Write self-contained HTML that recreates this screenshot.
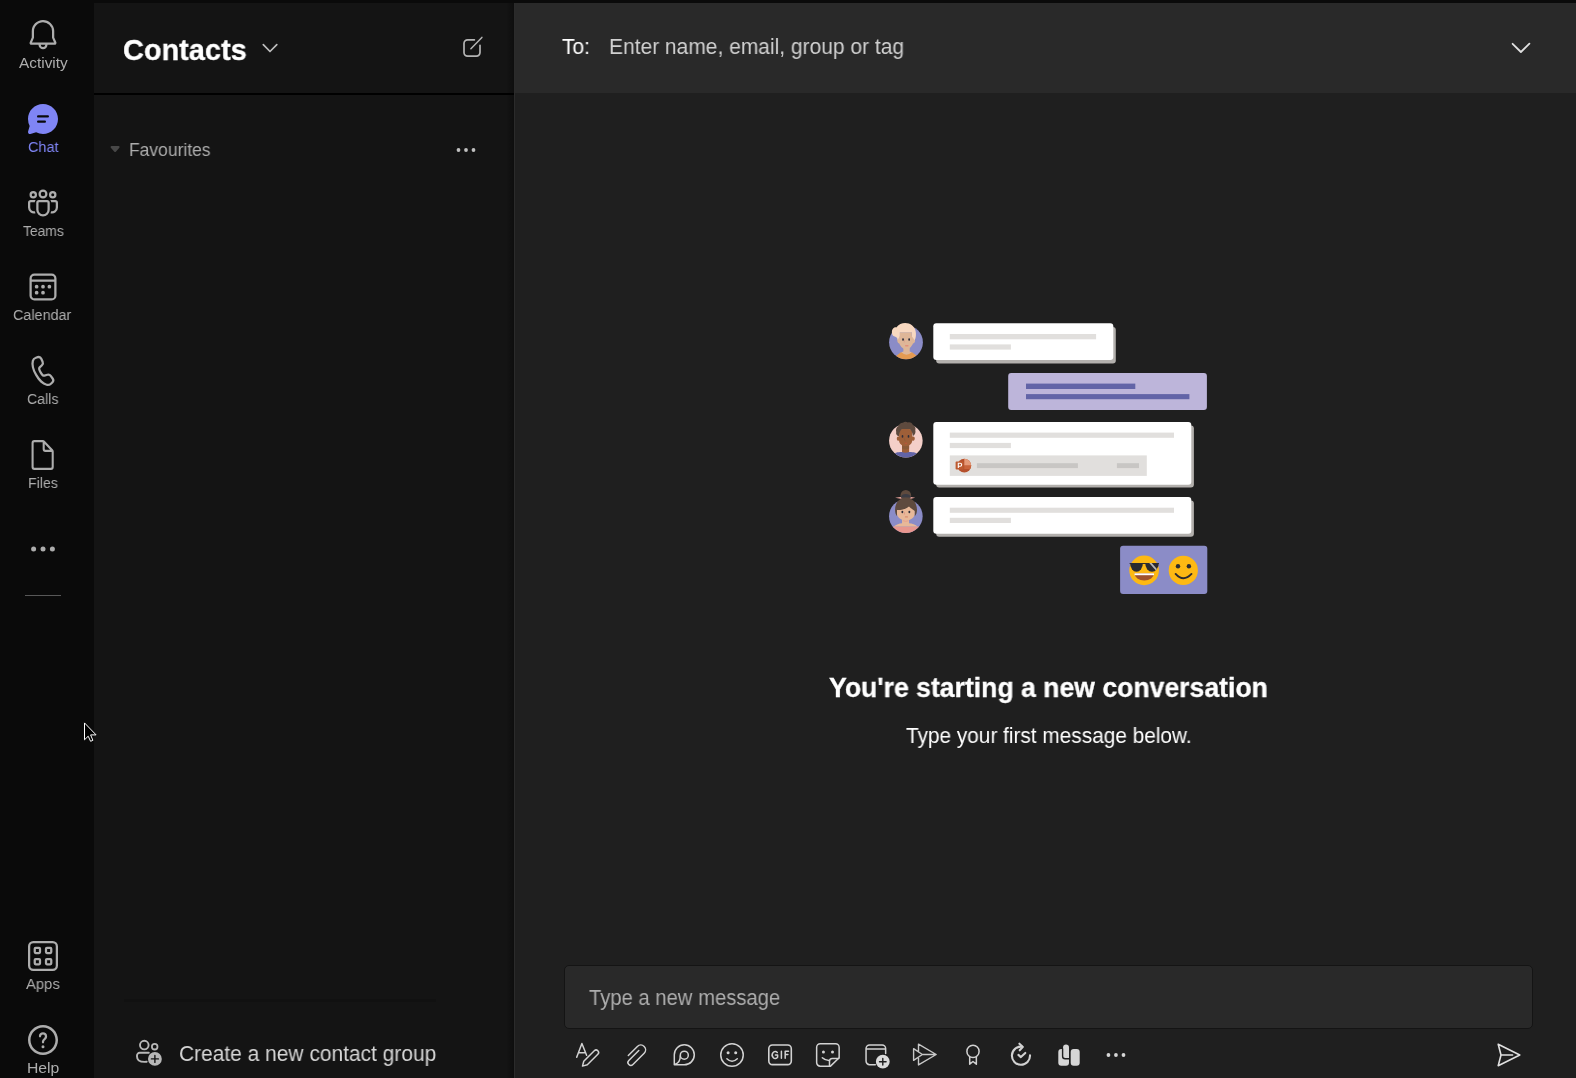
<!DOCTYPE html>
<html>
<head>
<meta charset="utf-8">
<title>Chat | Microsoft Teams</title>
<style>
*{margin:0;padding:0;box-sizing:border-box;}
html,body{width:1576px;height:1078px;overflow:hidden;background:#1f1f1f;}
body{font-family:"Liberation Sans",sans-serif;color:#fff;position:relative;}
.abs{position:absolute;}
.t{position:absolute;white-space:nowrap;line-height:1;transform-origin:0 0;will-change:transform;}
#topstrip{left:0;top:0;width:1576px;height:3px;background:#0a0a0a;}
#rail{left:0;top:0;width:94px;height:1078px;background:#0a0a0a;}
#panel{left:94px;top:3px;width:420px;height:1075px;background:#141414;}
#panelshade{left:506px;top:3px;width:8px;height:1075px;background:linear-gradient(90deg,rgba(0,0,0,0),rgba(0,0,0,.32));}
#panelline{left:94px;top:93px;width:420px;height:2px;background:#000;}
#mainhead{left:514px;top:3px;width:1062px;height:90px;background:#292929;}
#mainedge{left:514px;top:3px;width:1px;height:1075px;background:#2b2b2b;}
#compose{left:564px;top:965px;width:969px;height:64px;background:#292929;border:1px solid #141414;border-radius:5px;}
.rl{position:absolute;white-space:nowrap;line-height:1;color:#adadad;transform-origin:0 0;will-change:transform;}
svg{position:absolute;overflow:visible;}
</style>
</head>
<body>
<div class="abs" id="rail"></div>
<div class="abs" id="panel"></div>
<div class="abs" id="panelshade"></div>
<div class="abs" id="panelline"></div>
<div class="abs" id="mainhead"></div>
<div class="abs" id="mainedge"></div>
<div class="abs" id="topstrip"></div>
<div class="abs" id="compose"></div>

<!-- RAIL LABELS -->
<div class="rl" id="l-activity" style="left:18.95px;top:54.66px;font-size:15.4px;transform:scaleX(0.9997);">Activity</div>
<div class="rl" id="l-chat" style="left:27.96px;top:138.66px;font-size:15.4px;transform:scaleX(0.9391);color:#7f85f5">Chat</div>
<div class="rl" id="l-teams" style="left:23.08px;top:222.66px;font-size:15.4px;transform:scaleX(0.8989);">Teams</div>
<div class="rl" id="l-calendar" style="left:13.02px;top:306.66px;font-size:15.4px;transform:scaleX(0.9338);">Calendar</div>
<div class="rl" id="l-calls" style="left:27.32px;top:390.66px;font-size:15.4px;transform:scaleX(0.9211);">Calls</div>
<div class="rl" id="l-files" style="left:28.00px;top:474.66px;font-size:15.4px;transform:scaleX(0.9200);">Files</div>
<div class="rl" id="l-apps" style="left:26.17px;top:975.66px;font-size:15.4px;transform:scaleX(0.9618);">Apps</div>
<div class="rl" id="l-help" style="left:26.95px;top:1059.66px;font-size:15.4px;transform:scaleX(1.0226);">Help</div>

<!-- PANEL TEXT -->
<div class="t" id="t-contacts" style="left:122.67px;top:34.61px;font-size:30px;transform:scaleX(0.9634);font-weight:bold;-webkit-text-stroke:.35px #fff">Contacts</div>
<div class="t" id="t-fav" style="left:129.01px;top:141.34px;font-size:18.5px;transform:scaleX(0.9447);color:#adadad">Favourites</div>
<div class="t" id="t-create" style="left:178.68px;top:1042.62px;font-size:21.6px;transform:scaleX(0.9699);color:#d6d6d6">Create a new contact group</div>

<!-- MAIN TEXT -->
<div class="t" id="t-to" style="left:561.52px;top:35.62px;font-size:21.6px;transform:scaleX(0.9723);color:#fff">To:</div>
<div class="t" id="t-enter" style="left:609.36px;top:35.62px;font-size:21.6px;transform:scaleX(0.9714);color:#d0d0d0">Enter name, email, group or tag</div>
<div class="t" id="t-head" style="left:828.69px;top:675.11px;font-size:26.8px;transform:scaleX(0.9925);font-weight:bold;-webkit-text-stroke:.3px #fff">You're starting a new conversation</div>
<div class="t" id="t-sub" style="left:905.80px;top:724.72px;font-size:21.6px;transform:scaleX(0.9635);">Type your first message below.</div>
<div class="t" id="t-type" style="left:589.07px;top:986.72px;font-size:21.6px;transform:scaleX(0.9371);color:#adadad">Type a new message</div>


<!-- rail icons: 36px boxes (24-grid x1.5) -->
<svg id="i-activity" style="left:25px;top:16.5px" width="36" height="36" viewBox="0 0 24 24" fill="#adadad"><path d="M12 1.996a7.49 7.49 0 0 1 7.496 7.25l.004.25v4.097l1.380 3.156a1.250 1.250 0 0 1-1.145 1.750L15 18.502a3 3 0 0 1-5.995.177L9 18.499H4.275a1.251 1.251 0 0 1-1.147-1.747L4.500 13.594V9.496c0-4.155 3.352-7.500 7.500-7.500ZM13.500 18.500l-3 .002a1.500 1.500 0 0 0 2.993.145l.007-.147ZM12 3.496c-3.320 0-6 2.674-6 6v4.410L4.656 17h14.697L18 13.907V9.509l-.004-.225A5.988 5.988 0 0 0 12 3.496Z"/></svg>
<svg id="i-chat" style="left:25px;top:100.5px" width="36" height="36" viewBox="0 0 24 24" fill="#7f85f5"><path fill-rule="evenodd" d="M12 2c5.523 0 10 4.477 10 10s-4.477 10-10 10a9.960 9.960 0 0 1-4.587-1.112l-3.826 1.067a1.250 1.250 0 0 1-1.540-1.540l1.068-3.823A9.960 9.960 0 0 1 2 12C2 6.477 6.477 2 12 2ZM8.750 13a.750.750 0 0 0 0 1.500h4.500a.750.750 0 0 0 0-1.500h-4.500ZM8 10.250c0 .414.336.750.750.750h6.500a.750.750 0 0 0 0-1.500h-6.500a.750.750 0 0 0-.750.750Z"/></svg>
<svg id="i-teams" style="left:25px;top:184.5px" width="36" height="36" viewBox="0 0 24 24" fill="#adadad"><path d="M14.754 10c.966 0 1.750.784 1.750 1.750v4.749a4.501 4.501 0 0 1-9.002 0V11.750c0-.966.783-1.750 1.750-1.750h5.502Zm0 1.500H9.252a.250.250 0 0 0-.250.250v4.749a3.001 3.001 0 0 0 6.002 0V11.750a.250.250 0 0 0-.250-.250ZM3.750 10h3.381a2.738 2.738 0 0 0-.618 1.500H3.750a.250.250 0 0 0-.250.250v3.249a2.501 2.501 0 0 0 3.082 2.433c.085.504.240.985.453 1.432A4.001 4.001 0 0 1 2 14.999V11.750c0-.966.784-1.750 1.750-1.750Zm13.125 0h3.375c.966 0 1.750.784 1.750 1.750V15a4 4 0 0 1-5.030 3.866c.214-.448.369-.929.455-1.433A2.500 2.500 0 0 0 20.500 15v-3.250a.250.250 0 0 0-.250-.250h-2.757a2.738 2.738 0 0 0-.618-1.500ZM12 3a3 3 0 1 1 0 6 3 3 0 0 1 0-6Zm6.500 1a2.500 2.500 0 1 1 0 5 2.500 2.500 0 0 1 0-5Zm-13 0a2.500 2.500 0 1 1 0 5 2.500 2.500 0 0 1 0-5Zm6.500.5a1.500 1.500 0 1 0 0 3 1.500 1.500 0 0 0 0-3Zm6.500 1a1 1 0 1 0 0 2 1 1 0 0 0 0-2Zm-13 0a1 1 0 1 0 0 2 1 1 0 0 0 0-2Z"/></svg>
<svg id="i-calendar" style="left:25px;top:268.5px" width="36" height="36" viewBox="0 0 24 24" fill="#adadad"><path d="M17.750 3A3.250 3.250 0 0 1 21 6.250v11.500A3.250 3.250 0 0 1 17.750 21H6.250A3.250 3.250 0 0 1 3 17.750V6.250A3.250 3.250 0 0 1 6.250 3h11.500Zm1.750 5.500h-15v9.250c0 .966.784 1.750 1.750 1.750h11.500a1.750 1.750 0 0 0 1.750-1.750V8.500Zm-11.750 6a1.250 1.250 0 1 1 0 2.500 1.250 1.250 0 0 1 0-2.500Zm4.250 0a1.250 1.250 0 1 1 0 2.500 1.250 1.250 0 0 1 0-2.500Zm-4.250-4a1.250 1.250 0 1 1 0 2.500 1.250 1.250 0 0 1 0-2.500Zm4.250 0a1.250 1.250 0 1 1 0 2.500 1.250 1.250 0 0 1 0-2.500Zm4.250 0a1.250 1.250 0 1 1 0 2.500 1.250 1.250 0 0 1 0-2.500Zm1.500-6H6.250A1.750 1.750 0 0 0 4.500 6.250V7h15v-.750a1.750 1.750 0 0 0-1.750-1.750Z"/></svg>
<svg id="i-calls" style="left:25px;top:352.5px" width="36" height="36" viewBox="0 0 24 24" fill="#adadad"><path d="M7.056 2.418l1.167-.351a2.750 2.750 0 0 1 3.302 1.505l.902 2.006a2.750 2.750 0 0 1-.633 3.139L10.300 10.110a.250.250 0 0 0-.078.155c-.044.397.225 1.170.845 2.245.451.781.860 1.330 1.207 1.637.242.215.375.261.432.245l2.010-.615a2.750 2.750 0 0 1 3.034 1.020l1.281 1.776a2.750 2.750 0 0 1-.339 3.605l-.886.840a3.750 3.750 0 0 1-3.587.889c-2.754-.769-5.223-3.093-7.435-6.924-2.215-3.836-2.992-7.140-2.276-9.913a3.750 3.750 0 0 1 2.548-2.652Zm.433 1.437a2.250 2.250 0 0 0-1.529 1.590c-.602 2.332.087 5.261 2.123 8.788 2.033 3.522 4.222 5.582 6.540 6.230a2.250 2.250 0 0 0 2.151-.534l.887-.840a1.250 1.250 0 0 0 .154-1.639l-1.280-1.775a1.250 1.250 0 0 0-1.380-.464l-2.015.617c-1.170.348-2.232-.593-3.372-2.568C9 11.930 8.642 10.900 8.731 10.099c.047-.416.240-.800.546-1.086l1.494-1.393a1.250 1.250 0 0 0 .288-1.427l-.902-2.006a1.250 1.250 0 0 0-1.500-.684l-1.168.352Z"/></svg>
<svg id="i-files" style="left:26.45px;top:436.5px" width="33.3" height="36" viewBox="0 0 24 24" preserveAspectRatio="none" fill="#adadad"><path d="M6 2a2 2 0 0 0-2 2v16a2 2 0 0 0 2 2h12a2 2 0 0 0 2-2V9.828a2 2 0 0 0-.586-1.414l-5.828-5.828A2 2 0 0 0 12.172 2H6Zm-.5 2a.5.5 0 0 1 .5-.5h6V8a2 2 0 0 0 2 2h4.500v10a.5.5 0 0 1-.5.5H6a.5.5 0 0 1-.5-.5V4Zm11.880 4.500H14a.5.5 0 0 1-.5-.5V4.620l3.880 3.880Z"/></svg>
<svg id="i-more" style="left:25px;top:531px" width="36" height="36" viewBox="0 0 36 36" fill="#adadad"><circle cx="8.600" cy="18.100" r="2.500"/><circle cx="18" cy="18.100" r="2.500"/><circle cx="27.400" cy="18.100" r="2.500"/></svg>
<div class="abs" style="left:25px;top:595px;width:36px;height:1px;background:#585858"></div>
<svg id="i-apps" style="left:25px;top:938px" width="36" height="36" viewBox="0 0 24 24" fill="none" stroke="#adadad" stroke-width="1.500"><rect x="2.750" y="2.750" width="18.500" height="18.500" rx="2.750"/><rect x="6.500" y="6.500" width="3.500" height="3.500" rx=".6"/><rect x="14" y="6.500" width="3.500" height="3.500" rx=".6"/><rect x="6.500" y="14" width="3.500" height="3.500" rx=".6"/><rect x="14" y="14" width="3.500" height="3.500" rx=".6"/></svg>
<svg id="i-help" style="left:25px;top:1022px" width="36" height="36" viewBox="0 0 24 24" fill="#adadad"><path d="M12 2c5.523 0 10 4.478 10 10s-4.477 10-10 10S2 17.522 2 12 6.477 2 12 2Zm0 1.667c-4.595 0-8.333 3.738-8.333 8.333 0 4.595 3.738 8.333 8.333 8.333 4.595 0 8.333-3.738 8.333-8.333 0-4.595-3.738-8.333-8.333-8.333ZM12 15.500a1 1 0 1 1 0 2 1 1 0 0 1 0-2Zm0-8.750a2.750 2.750 0 0 1 2.750 2.750c0 1.010-.297 1.574-1.051 2.359l-.169.171c-.622.622-.780.886-.780 1.470a.750.750 0 0 1-1.500 0c0-1.010.297-1.574 1.051-2.359l.169-.171c.622-.622.780-.886.780-1.470a1.250 1.250 0 0 0-2.493-.128l-.007.128a.750.750 0 0 1-1.500 0A2.750 2.750 0 0 1 12 6.750Z"/></svg>


<!-- panel header icons -->
<svg style="left:0;top:0" width="1576" height="1078" viewBox="0 0 1576 1078" fill="none" stroke-linecap="round" stroke-linejoin="round">
 <path d="M263.3 44.700L270 51.500L276.800 44.700" stroke="#bdbdbd" stroke-width="1.700"/>
 <path d="M474.400 39.800H467.600a3.600 3.600 0 0 0-3.600 3.600V52.600a3.600 3.600 0 0 0 3.600 3.600H476.400a3.600 3.600 0 0 0 3.600-3.600V45.300" stroke="#b4b4b4" stroke-width="1.700"/>
 <path d="M481.900 37.400L470.900 48.700" stroke="#b4b4b4" stroke-width="1.500"/>
 <path d="M1512.600 43.800L1520.900 52L1529.400 43.700" stroke="#e0e0e0" stroke-width="1.800"/>
 <path d="M111.600 147H118.600L115.100 151Z" fill="#484848" stroke="#484848" stroke-width="2"/>
 <g fill="#c0c0c0" stroke="none"><circle cx="458.500" cy="150" r="1.900"/><circle cx="466" cy="150" r="1.900"/><circle cx="473.500" cy="150" r="1.900"/></g>
 <!-- create group icon -->
 <circle cx="144.300" cy="1045.100" r="4.300" stroke="#b8b8b8" stroke-width="1.900"/>
 <circle cx="154.700" cy="1046.700" r="2.800" stroke="#b8b8b8" stroke-width="1.800"/>
 <path d="M148.800 1052.800H139.700a2.700 2.700 0 0 0-2.700 2.700v.900c0 3.200 2.600 5.500 7.600 5.500.800 0 1.500-.050 2.100-.150" stroke="#b8b8b8" stroke-width="1.900"/>
 <circle cx="154.900" cy="1058.900" r="6.900" fill="#b8b8b8" stroke="none"/>
 <path d="M151.400 1058.900H158.400M154.900 1055.400V1062.400" stroke="#141414" stroke-width="1.400"/>
 <!-- cursor -->
 <path d="M84.500 723.300V739.800L88.200 736.200L90.600 741.300L92.900 740.300L90.600 734.900H95.700Z" fill="#000" stroke="#fff" stroke-width="1" stroke-linejoin="miter"/>
</svg>
<div class="abs" style="left:124px;top:999px;width:312px;height:3px;background:#111"></div>


<!-- compose toolbar icons -->
<svg style="left:0;top:0" width="1576" height="1078" viewBox="0 0 1576 1078" fill="none" stroke="#d2d2d2" stroke-width="1.500" stroke-linecap="round" stroke-linejoin="round">
 <!-- format -->
 <path d="M576.700 1057.300L581.900 1043.500L586.600 1055.300M578.500 1052.700H585.300"/>
 <g transform="translate(590.200 1058.400) rotate(45)"><path d="M-2.500 -8.300a2.500 2.500 0 0 1 5 0V6.600L0 10.900L-2.500 6.600Z"/></g>
 <!-- attach -->
 <g transform="translate(636 1055) rotate(45)"><path d="M-5.050 5.800V-7A4.800 4.800 0 0 1 4.550 -7V8.900A2.900 2.900 0 0 1 -1.250 8.900V-5.200"/></g>
 <!-- loop -->
 <path d="M674.300 1064.800V1054.800A10 10 0 1 1 684.300 1064.800Z"/>
 <circle cx="684.300" cy="1055.200" r="4"/>
 <path d="M680.300 1056C680.300 1060 679 1062.800 675.300 1064.200"/>
 <!-- emoji -->
 <circle cx="732" cy="1055" r="11.250"/>
 <circle cx="728.100" cy="1052.650" r="1.500" fill="#d2d2d2" stroke="none"/><circle cx="735.700" cy="1052.650" r="1.500" fill="#d2d2d2" stroke="none"/>
 <path d="M726.900 1058.700Q732 1063.700 737.300 1058.700"/>
 <!-- gif -->
 <rect x="768.800" y="1045.050" width="22.500" height="19.600" rx="3.600" stroke-width="1.600"/>
 <path d="M777.300 1052.400A3 3.550 0 1 0 777.600 1057.200V1055.100H775.400M781.400 1051.200V1058.300M785.200 1058.300V1051.200H788.500M785.200 1054.600H787.900" stroke-width="1.500"/>
 <!-- sticker -->
 <path d="M829.600 1066.150H820.200A3.550 3.550 0 0 1 816.650 1062.600V1047.400A3.550 3.550 0 0 1 820.200 1043.850H835.600A3.550 3.550 0 0 1 839.150 1047.400V1057.700L830.500 1066.150"/>
 <path d="M829.500 1066V1061.200A2.800 2.800 0 0 1 832.300 1058.400H838.800"/>
 <circle cx="823.450" cy="1052.100" r="1.500" fill="#d2d2d2" stroke="none"/><circle cx="832.500" cy="1052.100" r="1.500" fill="#d2d2d2" stroke="none"/>
 <path d="M822.300 1057.700Q825 1060.400 829 1060.400"/>
 <!-- schedule -->
 <path d="M875.300 1064.650H869.600A3.550 3.550 0 0 1 866.050 1061.100V1048.600A3.550 3.550 0 0 1 869.600 1045.050H882.100A3.550 3.550 0 0 1 885.650 1048.600V1053.600M866.300 1049.100H885.400"/>
 <circle cx="882.800" cy="1061.700" r="6.900" fill="#dcdcdc" stroke="none"/>
 <path d="M879.500 1061.700H886.100M882.800 1058.400V1065" stroke="#1f1f1f" stroke-width="1.400"/>
 <!-- stream -->
 <path d="M918.500 1051V1044.100L936.200 1054.500L918.500 1064.900V1058M913.600 1048.700L922.400 1054.500L913.600 1060.300ZM922.400 1054.500H936" stroke-width="1.400" stroke="#c8c8c8"/>
 <!-- praise -->
 <circle cx="973" cy="1051.400" r="6.100"/>
 <path d="M969.700 1057.200V1064.200L973 1061.500L976.350 1064.200V1057.200"/>
 <!-- approvals -->
 <g stroke-width="2.100"><path d="M1021.800 1046.700A9.050 9.050 0 1 0 1030 1055.300"/><path d="M1019.400 1043.700L1022.900 1046.900L1019.700 1050.300"/><path d="M1018.400 1054.900L1020.900 1057.100L1025.300 1052.900"/></g>
 <!-- viva -->
 <g fill="#d6d6d6" stroke="none"><rect x="1058.300" y="1049" width="10.700" height="16.700" rx="3"/><rect x="1070.700" y="1049" width="9" height="16.700" rx="3"/></g>
 <path d="M1063.050 1047.300A2.980 2.980 0 0 1 1069 1047.300V1058H1063.050Z" fill="#d6d6d6" stroke="none"/><path d="M1062.600 1048.500V1056.200A2.500 2.500 0 0 0 1065.100 1058.700H1069" stroke="#1f1f1f" stroke-width="1.400" stroke-linecap="butt"/>
 <!-- more -->
 <g fill="#d6d6d6" stroke="none"><circle cx="1108.450" cy="1055" r="1.900"/><circle cx="1115.950" cy="1055" r="1.900"/><circle cx="1123.500" cy="1055" r="1.900"/></g>
 <!-- send -->
 <path d="M1498.200 1044.300L1519.800 1055L1498.200 1065.700L1501 1055ZM1501 1055H1512.600" stroke="#e0e0e0" stroke-width="1.600"/>
</svg>

<!--ICONS4-->

<!-- illustration -->
<svg style="left:0;top:0" width="1576" height="1078" viewBox="0 0 1576 1078">
 <defs>
  <clipPath id="c1"><circle cx="906" cy="342.300" r="16.900"/></clipPath>
  <clipPath id="c2"><circle cx="905.850" cy="440.700" r="16.800"/></clipPath>
  <clipPath id="c3"><circle cx="905.850" cy="516.200" r="16.800"/></clipPath>
  <clipPath id="c3b"><path d="M880 480H930V516.200H922.650A16.800 16.800 0 0 1 889.050 516.200H880Z"/></clipPath>
  <clipPath id="ppt"><circle cx="964.300" cy="465.550" r="6.900"/></clipPath>
  <clipPath id="lensR"><path d="M1145.200 563H1158.800A6.800 8.700 0 0 1 1145.200 563Z"/></clipPath>
 </defs>
 <!-- bubble 1 -->
 <rect x="936.200" y="327" width="179.600" height="36.400" rx="3" fill="#b3b0ad"/>
 <rect x="933.300" y="323.300" width="180" height="36.800" rx="3" fill="#fff"/>
 <rect x="949.800" y="334" width="146.300" height="5.300" fill="#e1dfdd"/>
 <rect x="949.800" y="344.400" width="61.100" height="5.200" fill="#e1dfdd"/>
 <!-- bubble 2 -->
 <rect x="1008.200" y="373" width="198.700" height="37" rx="3" fill="#bdb5da"/>
 <rect x="1026" y="383.600" width="109.300" height="5.400" fill="#6264a7"/>
 <rect x="1026" y="394.100" width="163.400" height="5.100" fill="#6264a7"/>
 <!-- bubble 3 -->
 <rect x="936.200" y="425.500" width="257.700" height="62.100" rx="3" fill="#b3b0ad"/>
 <rect x="933.300" y="422.100" width="258" height="62.600" rx="3" fill="#fff"/>
 <rect x="949.800" y="432.600" width="224.200" height="5.200" fill="#e1dfdd"/>
 <rect x="949.800" y="442.900" width="61.100" height="5.200" fill="#e1dfdd"/>
 <rect x="949.800" y="455.400" width="197" height="20.500" fill="#e1dfdd"/>
 <rect x="976.900" y="463.200" width="101" height="4.900" fill="#c8c6c4"/>
 <rect x="1116.900" y="463.200" width="22.100" height="4.900" fill="#c8c6c4"/>
 <!-- ppt icon -->
 <g clip-path="url(#ppt)"><rect x="955" y="456" width="20" height="20" fill="#b5502c"/><rect x="964.300" y="456" width="12" height="9.600" fill="#e59a78"/><rect x="964.300" y="465.550" width="12" height="3.500" fill="#c9653c"/></g>
 <rect x="955.600" y="461.600" width="8" height="8" rx=".8" fill="#bd5a30"/>
 <path d="M958.300 468V463.300H960.200A1.450 1.450 0 0 1 960.200 466.200H958.300" fill="none" stroke="#fff" stroke-width="1.100"/>
 <!-- bubble 4 -->
 <rect x="936.200" y="500.400" width="257.700" height="36.400" rx="3" fill="#b3b0ad"/>
 <rect x="933.300" y="497" width="258" height="36.800" rx="3" fill="#fff"/>
 <rect x="949.800" y="507.700" width="224.200" height="5.100" fill="#e1dfdd"/>
 <rect x="949.800" y="517.800" width="61.100" height="5.200" fill="#e1dfdd"/>
 <!-- emoji bubble -->
 <rect x="1120.100" y="545.700" width="87.200" height="48.200" rx="3" fill="#8b8cc7"/>
 <circle cx="1144.100" cy="570.400" r="14.800" fill="#fdb913"/>
 <path d="M1129.600 563H1158.800V564H1129.600Z" fill="#2b2b30"/>
 <path d="M1130.100 563H1142.900A6.400 8.700 0 0 1 1130.100 563Z" fill="#2b2b30"/>
 <path d="M1145.200 563H1158.800A6.800 8.700 0 0 1 1145.200 563Z" fill="#2b2b30"/>
 <path d="M1149.500 562L1158 571.500" stroke="#b8b8b8" stroke-width="1.800" clip-path="url(#lensR)"/>
 <path d="M1134.500 573.300H1154A9.750 7.200 0 0 1 1134.500 573.300Z" fill="#a0522d"/>
 <rect x="1134.500" y="573.300" width="19.500" height="1.900" fill="#fff"/>
 <circle cx="1183.300" cy="570.400" r="14.600" fill="#fdb913"/>
 <circle cx="1178" cy="566.300" r="2.200" fill="#2b2b30"/><circle cx="1188.900" cy="566.300" r="2.200" fill="#2b2b30"/>
 <path d="M1175.600 573.900Q1183.300 582.600 1191.500 573.900" fill="none" stroke="#2b2b30" stroke-width="1.900" stroke-linecap="round"/>

 <!-- avatar 1 -->
 <circle cx="906" cy="342.300" r="16.900" fill="#8b8cc7"/>
 <g clip-path="url(#c1)">
  <path d="M894 362V357.500L901 352.200H912L919 357.500V362Z" fill="#e39a52"/>
  <path d="M903.400 347H909.700V351.500L911.800 352.300Q906.500 357 901.300 352.300L903.400 351.500Z" fill="#deb698"/>
 </g>
 <path d="M899.700 332.200H911.800V336L915 339.500C915.300 341.500 914.800 343 913 343.600C911.500 347 908.800 349.600 906.400 349.600C903.800 349.600 900.500 347 899.300 343.600C897.600 343 897.100 341.500 897.300 339.500L899.700 336Z" fill="#deb698"/>
 <path d="M892 333.500C891.500 329.500 893.500 327 896.300 327.400C898.500 324.500 902 323 905.200 323C910.500 323 914.500 326.500 915.600 331C916.300 334.500 916 338 914.700 340.300L911.900 336.500V332.300H899.800V336L897.800 340C897.500 338.500 896.800 337 895.300 336.700C893.500 336.400 892.300 335.300 892 333.500Z" fill="#f8d8c0"/>
 <rect x="902.200" y="338.200" width="1.700" height="2.600" rx=".8" fill="#2d2d3a"/><rect x="908.300" y="338.200" width="1.700" height="2.600" rx=".8" fill="#2d2d3a"/>
 <path d="M904.600 339.500L904.200 342.500" stroke="#d89c88" stroke-width=".7"/>
 <rect x="905" y="345" width="3.600" height="1.500" rx=".7" fill="#e0907c"/>

 <!-- avatar 2 -->
 <circle cx="905.850" cy="440.700" r="16.800" fill="#f4cfc8"/>
 <g clip-path="url(#c2)">
  <path d="M894 460V454.500C894 452.800 897 451.900 902 451.900H909.100C914 451.900 917.500 452.800 917.500 454.500V460Z" fill="#6264a7"/>
  <path d="M902 444H909.100V451.900Q905.500 453.500 902 451.900Z" fill="#9e5f38"/>
  <path d="M902 445.500H909.100V448.500Q905.500 450.500 902 448.500Z" fill="#8a5a38"/>
 </g>
 <path d="M899.100 432C899.100 430 900.500 429.100 902 429.100H909.300C911 429.100 912.200 430 912.200 432V436.600C913.400 436 914.900 436.600 914.800 438.400C914.700 440.100 913.500 441 912.200 440.600C912.200 443.800 909.300 446.300 905.700 446.300C902.100 446.300 899.100 443.800 899.100 440.600C897.900 441 896.800 440.100 896.800 438.400C896.800 436.600 898 436 899.100 436.600Z" fill="#9e5f38"/>
 <path d="M898.900 436.200C897 436 895.600 434 896.200 432C895.500 429.500 896.500 427 898.500 426C899 423.800 901 422.500 903 422.700C904.200 421.500 906.600 421.500 907.800 422.600C910 421.800 912.300 423 913 425.200C915 426 916 428.200 915.300 430.300C916 432.500 915 435 912.900 436.100C912.500 433.500 912 430.500 909.800 429H902C900 430.200 899.300 433.500 898.900 436.200Z" fill="#5e4a3e"/>
 <rect x="901.700" y="435.100" width="1.600" height="2.600" rx=".8" fill="#2d2d3a"/><rect x="907.700" y="435.100" width="1.600" height="2.600" rx=".8" fill="#2d2d3a"/>
 <path d="M903.700 437.500L905.300 441.200" stroke="#8a5a38" stroke-width=".7"/>
 <rect x="904.700" y="442.800" width="2.400" height="1.100" rx=".55" fill="#b8573a"/>

 <!-- avatar 3 -->
 <circle cx="905.850" cy="516.200" r="16.800" fill="#8b8cc7"/>
 <g clip-path="url(#c3)">
  <path d="M893 536V526.500H919V536Z" fill="#e8968e"/>
  <path d="M893.800 526.500C896 524.500 899.500 523.500 902.050 523.300V518.500H909.050V523.300C912 523.500 915.500 524.500 917.600 526.500Z" fill="#e8b898"/>
 </g>
 <path d="M895.060 497.850L900.500 497H911L915.200 497.850L911 498.800H900.500Z" fill="#f0a8a0"/>
 <circle cx="905.800" cy="495.300" r="5.300" fill="#5e4a3e"/>
 <path d="M900.900 497.600C901.200 495 903 494 905.800 494C908.600 494 910.500 495 910.800 497.600Z" fill="#3c3c44"/>
 <g clip-path="url(#c3b)">
 <path d="M897 505H914.800V513.500C914.800 517.500 910.500 520.500 906 520.500C901.500 520.500 897 517.500 897 513.500Z" fill="#e8b898"/>
 <path d="M895.060 510C895.060 502.500 899.500 497.800 905.900 497.800C912.500 497.800 917 502.500 917 510C917 512.500 916.300 514.500 914.800 516.200V511C913 509.500 910 508 909 506.500C906.500 509 901 510.300 897 510V516.200C895.700 514.500 895.060 512.500 895.060 510Z" fill="#5e4a3e"/>
 </g>
 <rect x="901.500" y="510.800" width="1.700" height="2.500" rx=".8" fill="#2d2d3a"/><rect x="908.500" y="510.800" width="1.700" height="2.500" rx=".8" fill="#2d2d3a"/>
 <path d="M904.700 512L904.300 514.700" stroke="#e09484" stroke-width=".8"/>
 <rect x="904.800" y="516.200" width="3.200" height="1.400" rx=".7" fill="#d88c70"/>
 <path d="M903 520.700Q905.500 522 908.500 520.700" stroke="#e8988c" stroke-width=".8" fill="none"/>
</svg>

</body>
</html>
